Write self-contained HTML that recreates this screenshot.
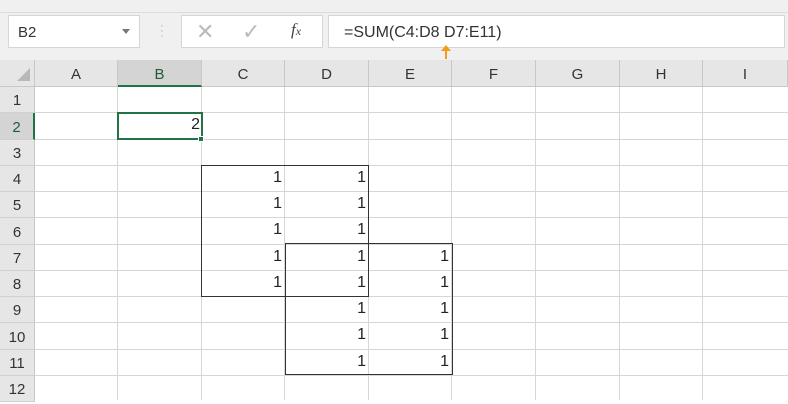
<!DOCTYPE html>
<html><head><meta charset="utf-8"><style>
body{margin:0;width:788px;height:400px;overflow:hidden;background:#fff;font-family:"Liberation Sans",sans-serif;position:relative}
div{position:absolute;box-sizing:border-box}
.top{left:0;top:0;width:788px;height:60px;background:#f0f0f0}
.box{background:#fff;border:1px solid #d6d6d6}
.hdr{top:60px;height:27px;background:#e6e6e6;color:#333;font-size:15px;text-align:center;line-height:29px;border-right:1px solid #c8c8c8;border-bottom:1px solid #c8c8c8}
.rh{left:0;width:35px;background:#e6e6e6;color:#333;font-size:15px;text-align:center;border-right:1px solid #c8c8c8;border-bottom:1px solid #d0d0d0}
.vl{top:87px;width:1px;height:313px;background:#d6d6d6}
.hl{left:35px;height:1px;width:753px;background:#d6d6d6}
.n{font-size:16px;color:#222;text-align:right;width:30px}
.bx{border:1.5px solid #333}
</style></head><body>
<div class="top"></div>
<div style="left:0;top:12px;width:788px;height:1px;background:#dcdcdc"></div>
<div class="box" style="left:8px;top:15px;width:132px;height:33px;font-size:15px;line-height:33px;padding-left:9px;color:#333">B2</div>
<div style="left:122px;top:29px;width:0;height:0;border-left:4px solid transparent;border-right:4px solid transparent;border-top:5px solid #777"></div>
<div style="left:160px;top:24px;color:#aaa;font-size:11px;line-height:5px">·<br>·<br>·</div>
<div class="box" style="left:181px;top:15px;width:142px;height:33px"></div>
<div style="left:196px;top:19px;color:#bbb;font-size:22px">✕</div>
<div style="left:242px;top:19px;color:#bbb;font-size:22px">✓</div>
<div style="left:291px;top:20px;color:#444;font-size:17px;font-family:'Liberation Serif',serif;font-style:italic">f<span style="font-size:12px">x</span></div>
<div class="box" style="left:328px;top:15px;width:457px;height:33px;font-size:16px;line-height:33px;padding-left:15px;color:#333">=SUM(C4:D8 D7:E11)</div>
<div style="left:441px;top:45px;width:0;height:0;border-left:5px solid transparent;border-right:5px solid transparent;border-bottom:6px solid #f39a1e"></div>
<div style="left:445px;top:50px;width:2px;height:9px;background:#f39a1e"></div>

<div class="hdr" style="left:0;width:35px"></div>
<div style="left:17px;top:68px;width:0;height:0;border-left:13px solid transparent;border-bottom:13px solid #b8b8b8"></div>
<div class="hdr" style="left:35px;width:83px">A</div>
<div class="hdr" style="left:118px;width:84px;background:#d4d4d4;color:#225a35;border-bottom:2px solid #217346">B</div>
<div class="hdr" style="left:202px;width:83px">C</div>
<div class="hdr" style="left:285px;width:84px">D</div>
<div class="hdr" style="left:369px;width:83px">E</div>
<div class="hdr" style="left:452px;width:84px">F</div>
<div class="hdr" style="left:536px;width:84px">G</div>
<div class="hdr" style="left:620px;width:83px">H</div>
<div class="hdr" style="left:703px;width:85px">I</div>

<div class="vl" style="left:117px"></div><div class="vl" style="left:201px"></div><div class="vl" style="left:284px"></div><div class="vl" style="left:368px"></div><div class="vl" style="left:451px"></div><div class="vl" style="left:535px"></div><div class="vl" style="left:619px"></div><div class="vl" style="left:702px"></div>
<div class="hl" style="top:112px"></div><div class="hl" style="top:139px"></div><div class="hl" style="top:165px"></div><div class="hl" style="top:191px"></div><div class="hl" style="top:217px"></div><div class="hl" style="top:244px"></div><div class="hl" style="top:270px"></div><div class="hl" style="top:296px"></div><div class="hl" style="top:322px"></div><div class="hl" style="top:349px"></div><div class="hl" style="top:375px"></div>

<div class="rh" style="top:87px;height:26px;line-height:28px">1</div>
<div class="rh" style="top:113px;height:27px;line-height:29px;background:#d4d4d4;color:#225a35;border-right:2px solid #217346">2</div>
<div class="rh" style="top:140px;height:26px;line-height:28px">3</div>
<div class="rh" style="top:166px;height:26px;line-height:28px">4</div>
<div class="rh" style="top:192px;height:26px;line-height:28px">5</div>
<div class="rh" style="top:218px;height:27px;line-height:29px">6</div>
<div class="rh" style="top:245px;height:26px;line-height:28px">7</div>
<div class="rh" style="top:271px;height:26px;line-height:28px">8</div>
<div class="rh" style="top:297px;height:26px;line-height:28px">9</div>
<div class="rh" style="top:323px;height:27px;line-height:29px">10</div>
<div class="rh" style="top:350px;height:26px;line-height:28px">11</div>
<div class="rh" style="top:376px;height:26px;line-height:28px">12</div>

<div style="left:117px;top:112px;width:86px;height:28px;border:2px solid #217346"></div>
<div style="left:198px;top:136px;width:6px;height:6px;background:#217346;border:1px solid #fff"></div>
<div class="n" style="left:170px;top:116px">2</div>

<div class="bx" style="left:201px;top:165px;width:168px;height:132px"></div>
<div class="bx" style="left:285px;top:243px;width:168px;height:132px"></div>

<div class="n" style="left:252px;top:169px">1</div><div class="n" style="left:336px;top:169px">1</div>
<div class="n" style="left:252px;top:195px">1</div><div class="n" style="left:336px;top:195px">1</div>
<div class="n" style="left:252px;top:221px">1</div><div class="n" style="left:336px;top:221px">1</div>
<div class="n" style="left:252px;top:248px">1</div><div class="n" style="left:336px;top:248px">1</div><div class="n" style="left:419px;top:248px">1</div>
<div class="n" style="left:252px;top:274px">1</div><div class="n" style="left:336px;top:274px">1</div><div class="n" style="left:419px;top:274px">1</div>
<div class="n" style="left:336px;top:300px">1</div><div class="n" style="left:419px;top:300px">1</div>
<div class="n" style="left:336px;top:326px">1</div><div class="n" style="left:419px;top:326px">1</div>
<div class="n" style="left:336px;top:353px">1</div><div class="n" style="left:419px;top:353px">1</div>
</body></html>
